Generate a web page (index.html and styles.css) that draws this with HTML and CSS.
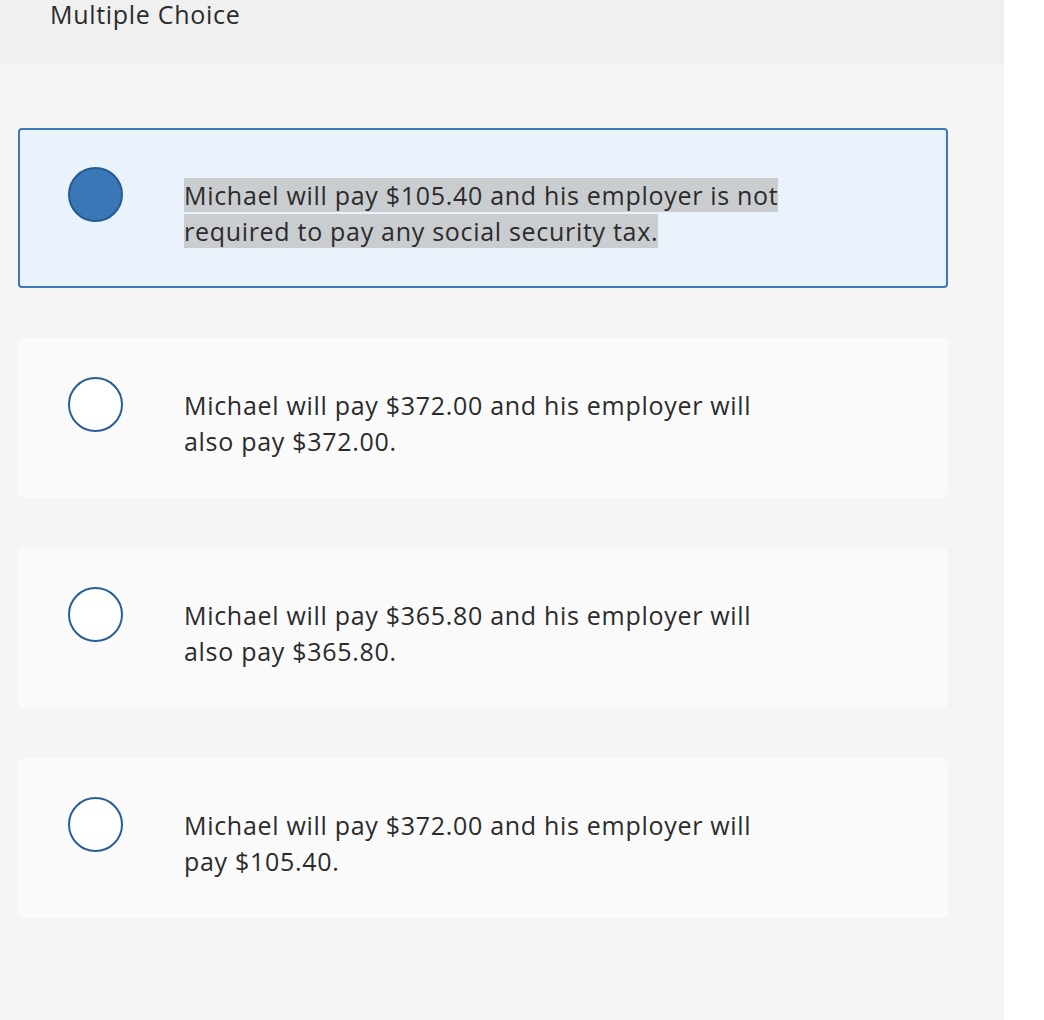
FILE: index.html
```html
<!DOCTYPE html>
<html lang="en">
<head>
    <meta charset="UTF-8">
    <title>Multiple Choice</title>
    <link rel="stylesheet" href="styles.css">
</head>
<body>
    <div class="page">
        <div class="header">Multiple Choice</div>
        <div class="choices">
            <label class="choice selected">
                <span class="radio"></span>
                <span class="answer"><span class="highlight">Michael will pay $105.40 and his employer is not required to pay any social security tax.</span></span>
            </label>
            <label class="choice">
                <span class="radio"></span>
                <span class="answer">Michael will pay $372.00 and his employer will also pay $372.00.</span>
            </label>
            <label class="choice">
                <span class="radio"></span>
                <span class="answer">Michael will pay $365.80 and his employer will also pay $365.80.</span>
            </label>
            <label class="choice">
                <span class="radio"></span>
                <span class="answer">Michael will pay $372.00 and his employer will pay $105.40.</span>
            </label>
        </div>
    </div>
</body>
</html>
```

FILE: styles.css
```css
body {
    margin: 0;
    background: #ffffff;
    font-family: "Open Sans", "Liberation Sans", sans-serif;
    color: #2b2b2b;
}
.page {
    width: 1004px;
    min-height: 1020px;
    background: #f5f5f5;
}
.header {
    height: 64px;
    background: #f0f0f0;
    padding-left: 50px;
    font-size: 25px;
    letter-spacing: 0.7px;
    line-height: 28px;
    box-sizing: border-box;
}
.choices {
    display: flex;
    flex-direction: column;
    gap: 50px;
    padding: 64px 56px 0 18px;
}
.choice {
    display: flex;
    align-items: flex-start;
    height: 160px;
    box-sizing: border-box;
    padding: 37px 0 0 48px;
    background: #fafafa;
    border: 2px solid transparent;
    border-radius: 6px;
}
.choice.selected {
    background: #eaf2fb;
    border-color: #3b78b8;
    border-radius: 4px;
}
.radio {
    flex: none;
    width: 55px;
    height: 55px;
    box-sizing: border-box;
    border: 2px solid #285e97;
    border-radius: 50%;
    background: #ffffff;
}
.selected .radio {
    background: #3b77b6;
    border-color: #255b93;
}
.answer {
    width: 610px;
    margin: 10px 0 0 61px;
    font-size: 25px;
    letter-spacing: 0.7px;
    line-height: 36px;
}
.highlight {
    background: #cacdd0;
}
```
